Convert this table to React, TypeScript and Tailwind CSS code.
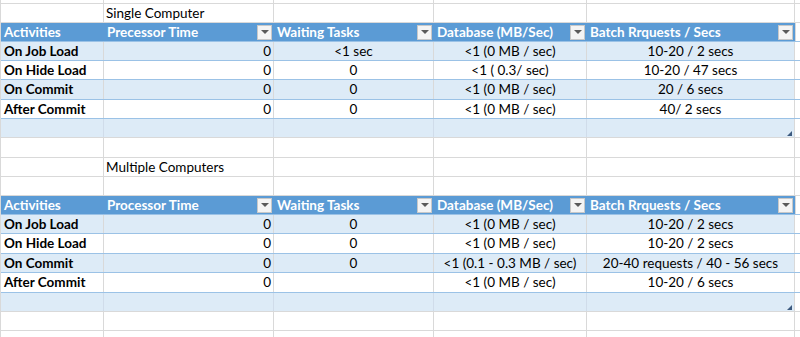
import React from "react";

const W = ["w-[103px]", "w-[170px]", "w-[160px]", "w-[153px]", "w-[208px]"];
const GRID = "border-[#d9d9d9]";

function Drop() {
  return (
    <span className="shrink-0 w-[15px] h-[15px] bg-[#f4f4f4] border border-[#c8c8c8] flex items-center justify-center">
      <span className="w-0 h-0 border-l-[4px] border-r-[4px] border-t-[4px] border-l-transparent border-r-transparent border-t-[#5a5a5a]" />
    </span>
  );
}

function Blank({ h, title }: { h: string; title?: string }) {
  return (
    <div className={`flex ${h} border-b ${GRID}`}>
      {W.map((w, i) => (
        <div key={i} className={`${w} shrink-0 h-full border-r ${GRID} flex items-center pl-[2px] pt-[1px] overflow-hidden whitespace-nowrap`}>
          {i === 1 && title ? title : null}
        </div>
      ))}
      <div className="flex-1" />
    </div>
  );
}

function Header({ h, labels }: { h: string; labels: string[] }) {
  return (
    <div className={`flex ${h} border-b border-[#9bc2e6]`}>
      {labels.map((l, i) => (
        <div key={i} className={`${W[i]} shrink-0 h-full bg-[#5b9bd5] flex items-center justify-between pl-[3px] pr-[2px] text-white font-bold whitespace-nowrap overflow-hidden`}>
          <span className="pt-[1px]">{l}</span>
          {i > 0 ? <Drop /> : null}
        </div>
      ))}
      <div className={`flex-1 border-l ${GRID}`} />
    </div>
  );
}

function Data({ h, v, band }: { h: string; v: string[]; band: boolean }) {
  const bg = band ? "bg-[#ddebf7]" : "bg-white";
  const align = ["justify-start pl-[3px] font-bold", "justify-end pr-[2px]", "justify-center", "justify-center", "justify-center"];
  return (
    <div className={`flex ${h} border-b border-[#9bc2e6]`}>
      {v.map((t, i) => (
        <div key={i} className={`${W[i]} shrink-0 h-full ${bg} border-r ${GRID} flex items-center pt-[1px] ${align[i]} whitespace-nowrap overflow-hidden`}>
          {t}
        </div>
      ))}
      <div className="flex-1" />
    </div>
  );
}

function Total({ h }: { h: string }) {
  return (
    <div className={`flex ${h} border-b ${GRID}`}>
      {W.map((w, i) => (
        <div key={i} className={`${w} shrink-0 h-full bg-[#ddebf7] border-r ${i === 4 ? GRID : "border-[#d0dcea]"} flex items-end justify-end`}>
          {i === 4 ? (
            <svg width="5" height="5" viewBox="0 0 5 5" className="mr-[2px] mb-[1px]">
              <polygon points="5,0 5,5 0,5" fill="#3c5a7f" />
            </svg>
          ) : null}
        </div>
      ))}
      <div className="flex-1" />
    </div>
  );
}

export default function App() {
  return (
    <div className="w-[800px] h-[337px] overflow-hidden bg-white text-black text-[13.5px] leading-none font-['Lato',sans-serif]">
      <div className={`border-l ${GRID}`}>
        <Blank h="h-[4px]" />
        <Blank h="h-[19px]" title="Single Computer" />
        <Header h="h-[19px]" labels={["Activities", "Precessor Time", "Waiting Tasks", "Database (MB/Sec)", "Batch Rrquests / Secs"]} />
        <Data h="h-[19px]" band v={["On Job Load", "0", "<1 sec", "<1 (0 MB / sec)", "10-20 / 2 secs"]} />
        <Data h="h-[19px]" band={false} v={["On Hide Load", "0", "0", "<1 ( 0.3/ sec)", "10-20 / 47 secs"]} />
        <Data h="h-[20px]" band v={["On Commit", "0", "0", "<1 (0 MB / sec)", "20 / 6 secs"]} />
        <Data h="h-[19px]" band={false} v={["After Commit", "0", "0", "<1 (0 MB / sec)", "40/ 2 secs"]} />
        <Total h="h-[19px]" />
        <Blank h="h-[20px]" />
        <Blank h="h-[19px]" title="Multiple Computers" />
        <Blank h="h-[19px]" />
        <Header h="h-[19px]" labels={["Activities", "Processor Time", "Waiting Tasks", "Database (MB/Sec)", "Batch Rrquests / Secs"]} />
        <Data h="h-[19px]" band v={["On Job Load", "0", "0", "<1 (0 MB / sec)", "10-20 / 2 secs"]} />
        <Data h="h-[20px]" band={false} v={["On Hide Load", "0", "0", "<1 (0 MB / sec)", "10-20 / 2 secs"]} />
        <Data h="h-[19px]" band v={["On Commit", "0", "0", "<1 (0.1 - 0.3 MB / sec)", "20-40 requests / 40 - 56 secs"]} />
        <Data h="h-[20px]" band={false} v={["After Commit", "0", "", "<1 (0 MB / sec)", "10-20 / 6 secs"]} />
        <Total h="h-[19px]" />
        <Blank h="h-[19px]" />
        <Blank h="h-[19px]" />
      </div>
    </div>
  );
}
